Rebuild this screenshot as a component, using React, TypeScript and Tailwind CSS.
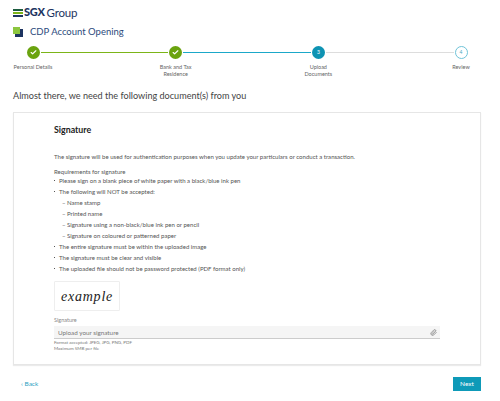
import React from 'react';
import { Check, Paperclip } from 'lucide-react';

const accepted = ['Name stamp', 'Printed name', 'Signature using a non-black/blue ink pen or pencil', 'Signature on coloured or patterned paper'];

function Done() {
  return (
    <div className="w-[13px] h-[13px] rounded-full bg-[#6aa30f] flex items-center justify-center shrink-0">
      <Check size={7} strokeWidth={4} className="text-white" />
    </div>
  );
}

function Bullet({ children }: { children: React.ReactNode }) {
  return (
    <li className="flex h-[11px] items-center">
      <span className="w-[1px] h-[1px] mr-[4px] bg-[#555555]" />
      {children}
    </li>
  );
}

export default function App() {
  return (
    <div className="w-[500px] h-[401px] overflow-hidden bg-white text-[#4a4a4a]" style={{ fontFamily: 'Lato, sans-serif' }}>
      <header className="pl-[13px] pt-[6px]">
        <div className="flex items-center h-[13px] text-[#1d3461]">
          <div className="w-[10px] flex flex-col gap-[1px] mr-[1px]">
            <div className="h-[2px] bg-[#1d5c3f]" />
            <div className="h-[2px] bg-[#7cb518]" />
            <div className="h-[2px] bg-[#1d3461]" />
          </div>
          <span className="text-[11px] font-black tracking-[-0.3px]">SGX</span>
          <span className="text-[11.5px] ml-[2px] tracking-[-0.2px]">Group</span>
        </div>
        <div className="flex items-center mt-[7px] h-[12px]">
          <div className="relative w-[10px] h-[10px] mr-[7px]">
            <div className="absolute right-0 bottom-0 w-[8px] h-[8px] bg-[#1d3461]" />
            <div className="absolute left-0 top-0 w-[7px] h-[7px] bg-[#8cc63f]" />
          </div>
          <span className="text-[9.5px] text-[#2c4a7c]">CDP Account Opening</span>
        </div>
      </header>

      <div className="mt-[8px] pl-[26.5px] pr-[32.5px] flex items-center h-[13px]">
        <Done />
        <div className="flex-1 h-[1px] mx-[1px] bg-[#7cb518]" />
        <Done />
        <div className="flex-1 h-[1px] mx-[1px] bg-[#1ba8c9]" />
        <div className="w-[13px] h-[13px] rounded-full bg-[#0e93b3] text-white text-[5px] flex items-center justify-center shrink-0">3</div>
        <div className="flex-1 h-[1px] mx-[1px] bg-[#dddddd]" />
        <div className="w-[13px] h-[13px] rounded-full border border-[#6fc3d8] text-[#4aa7c0] text-[5px] flex items-center justify-center shrink-0">4</div>
      </div>
      <div className="mt-[5px] pl-[3px] pr-[9px] flex justify-between text-[5.5px] leading-[7px] text-[#666666] text-center">
        <div className="w-[60px]">Personal Details</div>
        <div className="w-[60px]">Bank and Tax<br />Residence</div>
        <div className="w-[60px]">Upload<br />Documents</div>
        <div className="w-[60px]">Review</div>
      </div>

      <h1 className="ml-[13px] mt-[11px] text-[9.1px] leading-[13px] text-[#444444]">Almost there, we need the following document(s) from you</h1>

      <main className="ml-[13px] mt-[10px] w-[468px] h-[253px] border border-[#e6e6e6] shadow-[0_1px_1px_rgba(0,0,0,0.08)] pl-[40px] pt-[11px] text-[6.05px] leading-[11px] text-[#555555]">
        <h2 className="text-[8.8px] leading-[11px] font-bold text-[#222222]">Signature</h2>
        <p className="mt-[16px]">The signature will be used for authentication purposes when you update your particulars or conduct a transaction.</p>
        <p className="mt-[4px]">Requirements for signature</p>
        <ul className="-mt-[2px]">
          <Bullet>Please sign on a blank piece of white paper with a black/blue ink pen</Bullet>
          <Bullet>The following will NOT be accepted:</Bullet>
          {accepted.map((item) => (
            <li key={item} className="flex h-[11px] items-center pl-[8px]">
              <span className="w-[5px]">–</span>
              {item}
            </li>
          ))}
          <Bullet>The entire signature must be within the uploaded image</Bullet>
          <Bullet>The signature must be clear and visible</Bullet>
          <Bullet>The uploaded file should not be password protected (PDF format only)</Bullet>
        </ul>
        <div className="mt-[7px] w-[66px] h-[30px] border border-[#eeeeee] rounded-[1px] flex items-center justify-center text-[14px] italic tracking-[0.8px] text-[#222222]" style={{ fontFamily: '"Liberation Serif", serif' }}>
          example
        </div>
        <div className="mt-[6px] text-[5.5px] leading-[7px] text-[#888888]">Signature</div>
        <div className="mt-[2px] w-[386px] h-[13px] bg-[#f5f5f5] border-b border-[#cccccc] flex items-center justify-between pl-[4px] pr-[3px] text-[6.3px] text-[#777777]">
          Upload your signature
          <Paperclip size={7} strokeWidth={2} className="text-[#666666]" />
        </div>
        <div className="mt-[1px] text-[4.5px] leading-[5.5px] text-[#777777]">
          Format accepted: JPEG, JPG, PNG, PDF<br />Maximum 5MB per file
        </div>
      </main>

      <footer className="ml-[13px] mt-[12px] w-[468px] flex items-center justify-between">
        <a className="ml-[8px] text-[6.5px] text-[#2a9fbf]">‹ Back</a>
        <button className="w-[28px] h-[14px] bg-[#0e9ab8] text-white text-[6.5px]">Next</button>
      </footer>
    </div>
  );
}
